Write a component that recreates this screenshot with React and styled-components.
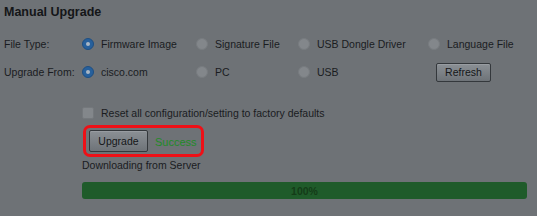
import React from "react";
import styled, { createGlobalStyle } from "styled-components";

const GlobalStyle = createGlobalStyle`
    html, body {
        margin: 0;
        padding: 0;
        background: #6e7276;
    }
    body {
        font-family: "Liberation Sans", Arial, sans-serif;
        color: #1a1c1f;
    }
`;

const fileTypes = ["Firmware Image", "Signature File", "USB Dongle Driver", "Language File"];
const sources = ["cisco.com", "PC", "USB"];

const App = () => {
    return (
        <Page>
            <GlobalStyle />
            <Title>Manual Upgrade</Title>
            <OptionGrid>
                <Label>File Type:</Label>
                {fileTypes.map((name, i) => (
                    <Option key={name}>
                        <Radio checked={i === 0} />
                        <span>{name}</span>
                    </Option>
                ))}
                <Label>Upgrade From:</Label>
                {sources.map((name, i) => (
                    <Option key={name}>
                        <Radio checked={i === 0} />
                        <span>{name}</span>
                    </Option>
                ))}
                <ButtonCell>
                    <Button>Refresh</Button>
                </ButtonCell>
            </OptionGrid>
            <Section>
                <Option>
                    <Checkbox />
                    <span>Reset all configuration/setting to factory defaults</span>
                </Option>
                <Highlight>
                    <Button wide>Upgrade</Button>
                    <Success>Success</Success>
                </Highlight>
                <Status>Downloading from Server</Status>
                <Progress>100%</Progress>
            </Section>
        </Page>
    );
};

const Page = styled.div`
    width: 537px;
    height: 216px;
    box-sizing: border-box;
    padding: 4px 0 0 4px;
    font-size: 10.5px;
    overflow: hidden;
`;

const Title = styled.h2`
    margin: 0;
    font-size: 12.5px;
    line-height: 16px;
    font-weight: bold;
    color: #141618;
`;

const OptionGrid = styled.div`
    display: grid;
    grid-template-columns: 78px 114px 102px 130px auto;
    grid-auto-rows: 28px;
    align-items: center;
    margin-top: 10px;
`;

const Label = styled.div`
    line-height: 14px;
`;

const Option = styled.label`
    display: flex;
    align-items: center;
    gap: 7px;
    line-height: 14px;
    white-space: nowrap;
`;

const Radio = styled.span`
    width: 12px;
    height: 12px;
    border-radius: 50%;
    box-sizing: border-box;
    flex-shrink: 0;
    background: ${(p) => (p.checked ? "#27609c" : "#83878b")};
    border: 1px solid ${(p) => (p.checked ? "#1f4f82" : "#787c80")};
    display: flex;
    align-items: center;
    justify-content: center;
    &::after {
        content: "";
        width: 4px;
        height: 4px;
        border-radius: 50%;
        background: ${(p) => (p.checked ? "#a9b6c4" : "transparent")};
    }
`;

const Checkbox = styled.span`
    width: 12px;
    height: 12px;
    box-sizing: border-box;
    flex-shrink: 0;
    border-radius: 2px;
    background: #83878b;
    border: 1px solid #74787c;
`;

const ButtonCell = styled.div`
    padding-left: 8px;
`;

const Button = styled.button`
    font-family: "Liberation Sans", Arial, sans-serif;
    font-size: 10.5px;
    color: #141618;
    height: ${(p) => (p.wide ? "22px" : "19px")};
    width: ${(p) => (p.wide ? "59px" : "55px")};
    padding: 0;
    border: 1px solid #34383c;
    border-radius: 2px;
    background: linear-gradient(#8b9095, #6e7378);
    box-shadow: inset 0 1px 0 rgba(255, 255, 255, 0.12);
`;

const Section = styled.div`
    margin: 20px 0 0 78px;
    display: flex;
    flex-direction: column;
    align-items: flex-start;
`;

const Highlight = styled.div`
    display: flex;
    align-items: center;
    gap: 7px;
    margin: 5px 0 0 1px;
    width: 121px;
    height: 32px;
    box-sizing: border-box;
    padding: 0 0 0 3px;
    border: 3px solid #ee1017;
    border-radius: 7px;
`;

const Success = styled.span`
    color: #228a28;
    font-size: 11px;
    padding-top: 2px;
`;

const Status = styled.div`
    margin-top: 1px;
    line-height: 14px;
`;

const Progress = styled.div`
    margin-top: 10px;
    width: 445px;
    height: 17px;
    border-radius: 3px;
    background: #1f5b2a;
    color: #143c18;
    font-weight: bold;
    font-size: 10.5px;
    display: flex;
    align-items: center;
    justify-content: center;
`;

export default App;
